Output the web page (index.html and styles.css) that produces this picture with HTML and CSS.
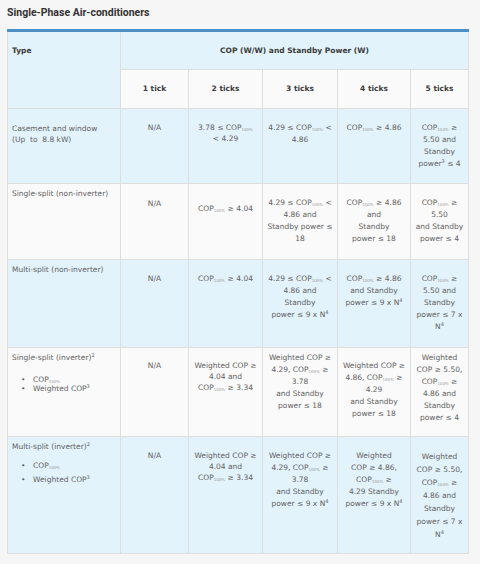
FILE: index.html
```html
<!DOCTYPE html>
<html>
<head>
<meta charset="utf-8">
<link rel="stylesheet" href="styles.css">
</head>
<body>
<div class="wrap">
  <div class="title">Single-Phase Air-conditioners</div>
  <table class="grid">
    <colgroup>
      <col class="c-type"><col class="c1"><col class="c2"><col class="c3"><col class="c4"><col class="c5">
    </colgroup>
    <tr class="h1">
      <th class="th-type" rowspan="2">Type</th>
      <th class="th-cop" colspan="5">COP (W/W) and Standby Power (W)</th>
    </tr>
    <tr class="h2">
      <th class="th-tick">1 tick</th>
      <th class="th-tick">2 ticks</th>
      <th class="th-tick">3 ticks</th>
      <th class="th-tick">4 ticks</th>
      <th class="th-tick">5 ticks</th>
    </tr>
    <tr class="row blue r1">
      <td class="type p14 lh11">Casement and window<br>(Up&nbsp; to&nbsp; 8.8 kW)</td>
      <td class="p13">N/A</td>
      <td class="p13 lh11">3.78 ≤ COP<sub>100%</sub><br>&lt; 4.29</td>
      <td class="p13">4.29 ≤ COP<sub>100%</sub> &lt;<br>4.86</td>
      <td class="p13">COP<sub>100%</sub> ≥ 4.86</td>
      <td class="p13">COP<sub>100%</sub> ≥<br>5.50 and<br>Standby<br>power<sup>3</sup> ≤ 4</td>
    </tr>
    <tr class="row r2">
      <td class="type p4">Single-split (non-inverter)</td>
      <td class="p14">N/A</td>
      <td class="p19">COP<sub>100%</sub> ≥ 4.04</td>
      <td class="p13">4.29 ≤ COP<sub>100%</sub> &lt;<br>4.86 and<br>Standby power ≤<br>18</td>
      <td class="p13">COP<sub>100%</sub> ≥ 4.86<br>and<br>Standby<br>power ≤ 18</td>
      <td class="p13">COP<sub>100%</sub> ≥<br>5.50<br>and Standby<br>power ≤ 4</td>
    </tr>
    <tr class="row blue r3">
      <td class="type p4">Multi-split (non-inverter)</td>
      <td class="p13">N/A</td>
      <td class="p13">COP<sub>100%</sub> ≥ 4.04</td>
      <td class="p13">4.29 ≤ COP<sub>100%</sub> &lt;<br>4.86 and<br>Standby<br>power ≤ 9 x N<sup>4</sup></td>
      <td class="p13">COP<sub>100%</sub> ≥ 4.86<br>and Standby<br>power ≤ 9 x N<sup>4</sup></td>
      <td class="p13">COP<sub>100%</sub> ≥<br>5.50 and<br>Standby<br>power ≤ 7 x<br>N<sup>4</sup></td>
    </tr>
    <tr class="row r4">
      <td class="type p4">Single-split (inverter)<sup>2</sup>
        <ul class="bullets tight">
          <li>COP<sub>100%</sub></li>
          <li>Weighted COP<sup>3</sup></li>
        </ul>
      </td>
      <td class="p12">N/A</td>
      <td class="p12 lh11">Weighted COP ≥<br>4.04 and<br>COP<sub>100%</sub> ≥ 3.34</td>
      <td class="p4">Weighted COP ≥<br>4.29, COP<sub>100%</sub> ≥<br>3.78<br>and Standby<br>power ≤ 18</td>
      <td class="p12">Weighted COP ≥<br>4.86, COP<sub>100%</sub> ≥<br>4.29<br>and Standby<br>power ≤ 18</td>
      <td class="p4">Weighted<br>COP ≥ 5.50,<br>COP<sub>100%</sub> ≥<br>4.86 and<br>Standby<br>power ≤ 4</td>
    </tr>
    <tr class="row blue r5">
      <td class="type p4">Multi-split (inverter)<sup>2</sup>
        <ul class="bullets loose">
          <li>COP<sub>100%</sub></li>
          <li>Weighted COP<sup>3</sup></li>
        </ul>
      </td>
      <td class="p13">N/A</td>
      <td class="p13 lh11">Weighted COP ≥<br>4.04 and<br>COP<sub>100%</sub> ≥ 3.34</td>
      <td class="p13">Weighted COP ≥<br>4.29, COP<sub>100%</sub> ≥<br>3.78<br>and Standby<br>power ≤ 9 x N<sup>4</sup></td>
      <td class="p13">Weighted<br>COP ≥ 4.86,<br>COP<sub>100%</sub> ≥<br>4.29 Standby<br>power ≤ 9 x N<sup>4</sup></td>
      <td class="p13 lh13">Weighted<br>COP ≥ 5.50,<br>COP<sub>100%</sub> ≥<br>4.86 and<br>Standby<br>power ≤ 7 x<br>N<sup>4</sup></td>
    </tr>
  </table>
</div>
</body>
</html>
```

FILE: styles.css
```css
html, body {
  margin: 0;
  padding: 0;
  background: #f6f6f6;
}

.wrap {
  padding: 7px 12px 0 7px;
}

.title {
  font-family: Roboto, "Liberation Sans", sans-serif;
  font-weight: 700;
  font-size: 10.5px;
  line-height: 12px;
  color: #333;
}

.grid {
  margin-top: 10px;
  width: 461px;
  table-layout: fixed;
  border-collapse: collapse;
  border-top: 3px solid #4b8fc4;
  font-family: "DejaVu Sans", Verdana, sans-serif;
  font-size: 7.5px;
  line-height: 12px;
  color: #626262;
}

.c-type { width: 113px; }
.c1 { width: 68px; }
.c2 { width: 74px; }
.c3 { width: 75px; }
.c4 { width: 73px; }
.c5 { width: 58px; }

.grid th,
.grid td {
  border: 1px solid #dedede;
  padding: 0 4px;
  text-align: center;
  vertical-align: top;
}

.grid th {
  font-weight: 700;
  color: #3a3a3a;
}

.h1 { height: 39px; }
.h2 { height: 39px; }

.th-type {
  background: #e2f3fb;
  text-align: left !important;
  padding-top: 13px !important;
}

.th-cop {
  background: #e2f3fb;
  vertical-align: middle !important;
}

.th-tick {
  background: #fafafa;
  vertical-align: middle !important;
}

.row { background: #fafafa; }
.row.blue { background: #e2f3fb; }

.r1 { height: 75px; }
.r2 { height: 76px; }
.r3 { height: 88px; }
.r4 { height: 89px; }
.r5 { height: 117px; }

.grid td.type { text-align: left; }

.p4 { padding-top: 4px !important; }
.p12 { padding-top: 12px !important; }
.p13 { padding-top: 13px !important; }
.p14 { padding-top: 14px !important; }
.p19 { padding-top: 19px !important; }

.lh11 { line-height: 11px; }
.lh13 { line-height: 13px; }

sub, sup {
  line-height: 0;
}

sub {
  font-size: 4px;
  color: #9a9a9a;
  vertical-align: -1px;
}

sup {
  font-size: 5px;
  vertical-align: 3px;
}

.bullets {
  list-style: none;
  margin: 0;
  padding: 0 0 0 9px;
}

.bullets li::before {
  content: "•";
  display: inline-block;
  width: 12px;
}

.bullets.tight {
  margin-top: 12px;
  line-height: 8.5px;
}

.bullets.loose {
  margin-top: 6px;
  line-height: 13.5px;
}
```
